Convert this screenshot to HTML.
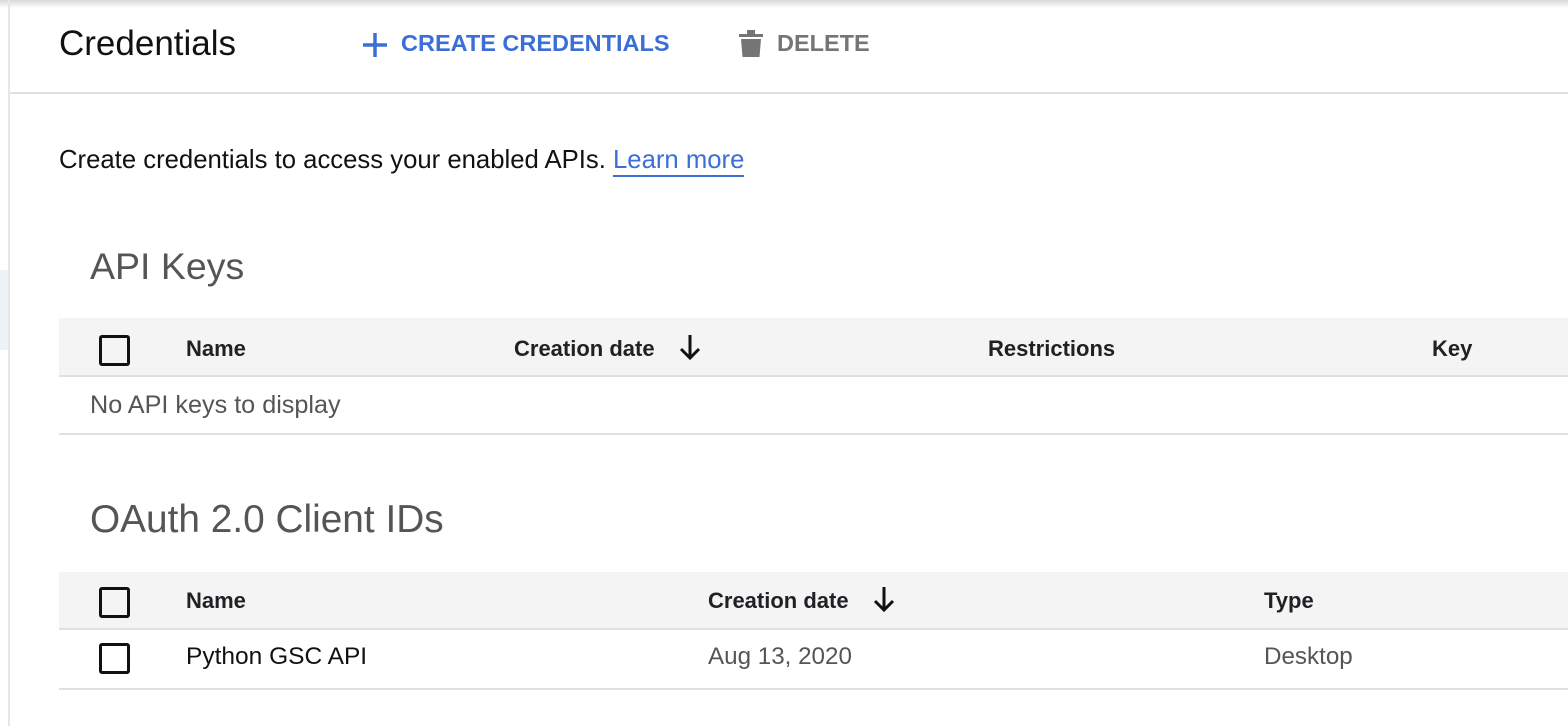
<!DOCTYPE html>
<html><head><meta charset="utf-8"><style>
*{margin:0;padding:0;box-sizing:border-box}
body{width:1568px;height:726px;overflow:hidden;background:#fff;font-family:"Liberation Sans",Arial,sans-serif;position:relative;color:#202124}
.a{position:absolute;white-space:nowrap}
.cb{position:absolute;width:31px;height:31px;border:3px solid #111;border-radius:3px}
.hdr{font-weight:bold;font-size:22px;color:#202124}
.arr{position:absolute}
</style></head><body>
<div class="a" style="left:0;top:0;width:1568px;height:8px;background:linear-gradient(#d8d8d8,#fff)"></div>
<div class="a" style="left:8px;top:0;width:2px;height:726px;background:#e6e6e6"></div>
<div class="a" style="left:0;top:270px;width:8px;height:80px;background:#eef2f6"></div>
<div class="a" style="left:10px;top:92px;width:1558px;height:2px;background:#e0e0e0"></div>

<div class="a" style="left:59px;top:24px;font-size:35px;color:#111">Credentials</div>
<svg class="a" style="left:362px;top:32px" width="26" height="26" viewBox="0 0 26 26"><path d="M13 1V25M1 13H25" stroke="#3b6fd6" stroke-width="3.5"/></svg>
<div class="a" style="left:401px;top:30px;font-size:23.5px;font-weight:bold;color:#3b6fd6">CREATE CREDENTIALS</div>
<svg class="a" style="left:739px;top:30px" width="26" height="28" viewBox="0 0 26 28"><rect x="0" y="4" width="24" height="3" fill="#757575"/><rect x="8" y="0" width="8" height="4" fill="#757575"/><path d="M2 9H22L20.5 27H3.5Z" fill="#757575"/></svg>
<div class="a" style="left:777px;top:30px;font-size:23.5px;font-weight:bold;color:#757575">DELETE</div>

<div class="a" style="left:59px;top:146px;font-size:25.7px;color:#111">Create credentials to access your enabled APIs. <span style="color:#3b6fd6;border-bottom:2px solid #3b6fd6;padding-bottom:1px">Learn more</span></div>

<div class="a" style="left:90px;top:245px;font-size:37.5px;color:#555">API Keys</div>
<div class="a" style="left:59px;top:318px;width:1509px;height:59px;background:#f4f4f4;border-bottom:2px solid #e0e0e0"></div>
<div class="cb" style="left:99px;top:335px"></div>
<div class="a hdr" style="left:186px;top:336px">Name</div>
<div class="a hdr" style="left:514px;top:336px">Creation date</div>
<svg class="arr" style="left:678px;top:333px" width="24" height="28" viewBox="0 0 24 28"><path d="M12 2V25M3 16L12 25L21 16" stroke="#111" stroke-width="3" fill="none"/></svg>
<div class="a hdr" style="left:988px;top:336px">Restrictions</div>
<div class="a hdr" style="left:1432px;top:336px">Key</div>
<div class="a" style="left:90px;top:391px;font-size:25.2px;color:#555">No API keys to display</div>
<div class="a" style="left:59px;top:433px;width:1509px;height:2px;background:#e0e0e0"></div>

<div class="a" style="left:90px;top:498px;font-size:38.8px;color:#555">OAuth 2.0 Client IDs</div>
<div class="a" style="left:59px;top:572px;width:1509px;height:58px;background:#f4f4f4;border-bottom:2px solid #e0e0e0"></div>
<div class="cb" style="left:99px;top:587px"></div>
<div class="a hdr" style="left:186px;top:588px">Name</div>
<div class="a hdr" style="left:708px;top:588px">Creation date</div>
<svg class="arr" style="left:872px;top:585px" width="24" height="28" viewBox="0 0 24 28"><path d="M12 2V25M3 16L12 25L21 16" stroke="#111" stroke-width="3" fill="none"/></svg>
<div class="a hdr" style="left:1264px;top:588px">Type</div>
<div class="cb" style="left:99px;top:643px"></div>
<div class="a" style="left:186px;top:643px;font-size:24.5px;color:#111">Python GSC API</div>
<div class="a" style="left:708px;top:643px;font-size:24.2px;color:#555">Aug 13, 2020</div>
<div class="a" style="left:1264px;top:643px;font-size:24.2px;color:#555">Desktop</div>
<div class="a" style="left:59px;top:688px;width:1509px;height:2px;background:#e0e0e0"></div>
</body></html>
